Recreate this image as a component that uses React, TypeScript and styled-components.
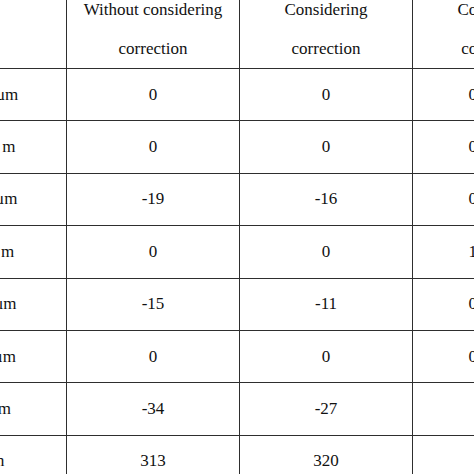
import React from "react";
import styled, { createGlobalStyle } from "styled-components";

const GlobalStyle = createGlobalStyle`
  html, body {
    margin: 0;
    padding: 0;
    background: #ffffff;
    overflow: hidden;
  }
`;

const Page = styled.div`
  width: 474px;
  height: 474px;
  overflow: hidden;
  background: #ffffff;
`;

const Table = styled.table`
  margin: -10px 0 0 -107px;
  border-collapse: collapse;
  table-layout: fixed;
  width: 688px;
`;

const HeadCell = styled.th`
  width: 172px;
  padding: 0;
  font-family: "Liberation Serif", "Times New Roman", serif;
  font-size: 17px;
  font-weight: normal;
  color: #111;
  line-height: 39px;
  text-align: center;
  white-space: nowrap;
  border: 1px solid #2e2e2e;
  border-top: none;
`;

const Row = styled.tr`
  height: 52.4px;
`;

const Cell = styled.td`
  padding: 0;
  font-family: "Liberation Serif", "Times New Roman", serif;
  font-size: 17px;
  color: #111;
  text-align: center;
  vertical-align: middle;
  white-space: nowrap;
  border: 1px solid #2e2e2e;
`;

type Line = {
  label: string;
  without: string;
  considering: string;
  corrected: string;
};

const rows: Line[] = [
  { label: "X error/μm", without: "0", considering: "0", corrected: "0.0000%" },
  { label: "Y error/ m", without: "0", considering: "0", corrected: "0.0000%" },
  { label: "Z error/μm", without: "-19", considering: "-16", corrected: "0.0000%" },
  { label: "α error/ m", without: "0", considering: "0", corrected: "1.0000%" },
  { label: "β error/μm", without: "-15", considering: "-11", corrected: "0.0000%" },
  { label: "γ error/μm", without: "0", considering: "0", corrected: "0.0000%" },
  { label: "Total/μm", without: "-34", considering: "-27", corrected: "-8.2%" },
  { label: "Max/m", without: "313", considering: "320", corrected: "92%" },
];

const App = () => {
  return (
    <Page>
      <GlobalStyle />
      <Table>
        <thead>
          <tr>
            <HeadCell>Item</HeadCell>
            <HeadCell>
              Without considering
              <br />
              correction
            </HeadCell>
            <HeadCell>
              Considering
              <br />
              correction
            </HeadCell>
            <HeadCell>
              Considering
              <br />
              corrections
            </HeadCell>
          </tr>
        </thead>
        <tbody>
          {rows.map((row) => (
            <Row key={row.label}>
              <Cell>{row.label}</Cell>
              <Cell>{row.without}</Cell>
              <Cell>{row.considering}</Cell>
              <Cell>{row.corrected}</Cell>
            </Row>
          ))}
        </tbody>
      </Table>
    </Page>
  );
};

export default App;
